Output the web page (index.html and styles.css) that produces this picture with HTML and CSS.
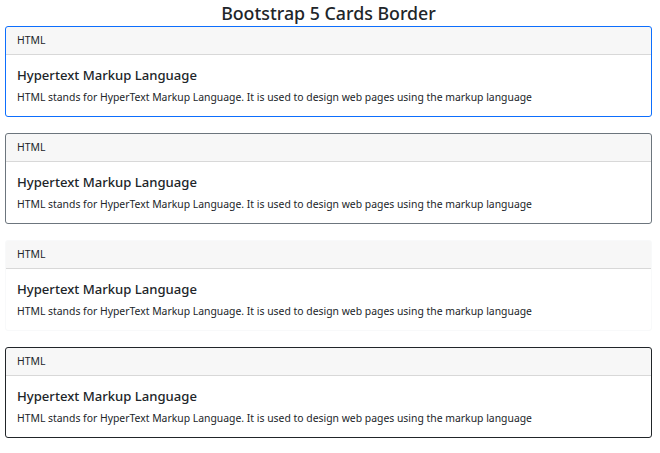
FILE: index.html
```html
<!DOCTYPE html>
<html lang="en">
<head>
    <meta charset="UTF-8">
    <meta name="viewport" content="width=device-width, initial-scale=1.0">
    <title>Bootstrap 5 Cards Border</title>
    <link rel="stylesheet" href="styles.css">
</head>
<body>
    <div class="container">
        <h2>Bootstrap 5 Cards Border</h2>

        <div class="card border-primary">
            <div class="card-header">HTML</div>
            <div class="card-body">
                <h5 class="card-title">Hypertext Markup Language</h5>
                <p class="card-text">HTML stands for HyperText Markup Language. It is used to design web pages using the markup language</p>
            </div>
        </div>

        <div class="card border-secondary">
            <div class="card-header">HTML</div>
            <div class="card-body">
                <h5 class="card-title">Hypertext Markup Language</h5>
                <p class="card-text">HTML stands for HyperText Markup Language. It is used to design web pages using the markup language</p>
            </div>
        </div>

        <div class="card border-light">
            <div class="card-header">HTML</div>
            <div class="card-body">
                <h5 class="card-title">Hypertext Markup Language</h5>
                <p class="card-text">HTML stands for HyperText Markup Language. It is used to design web pages using the markup language</p>
            </div>
        </div>

        <div class="card border-dark">
            <div class="card-header">HTML</div>
            <div class="card-body">
                <h5 class="card-title">Hypertext Markup Language</h5>
                <p class="card-text">HTML stands for HyperText Markup Language. It is used to design web pages using the markup language</p>
            </div>
        </div>
    </div>
</body>
</html>
```

FILE: styles.css
```css
/* Reset */
* {
    margin: 0;
    padding: 0;
    box-sizing: border-box;
}

body {
    font-family: "Noto Sans", "Open Sans", sans-serif;
    font-size: 10.4px;
    color: #212529;
    background: #fff;
}

.container {
    padding: 0 8px 0 5px;
}

h2 {
    text-align: center;
    font-size: 17.8px;
    font-weight: 500;
    line-height: 26px;
}

/* Cards */
.card {
    border: 1px solid rgba(0, 0, 0, 0.125);
    border-radius: 3px;
    margin-bottom: 16px;
    overflow: hidden;
}

.card-header {
    padding: 5px 11px;
    line-height: 17px;
    background-color: rgba(0, 0, 0, 0.03);
    border-bottom: 1px solid rgba(0, 0, 0, 0.125);
}

.card-body {
    padding: 12px 11px 10px;
}

.card-title {
    font-size: 13.1px;
    font-weight: 500;
    line-height: 17px;
    margin-bottom: 5px;
}

.card-text {
    line-height: 17px;
}

/* Border colours */
.border-primary {
    border-color: #0d6efd;
}

.border-secondary {
    border-color: #6c757d;
}

.border-light {
    border-color: #f8f9fa;
}

.border-dark {
    border-color: #212529;
}
```
